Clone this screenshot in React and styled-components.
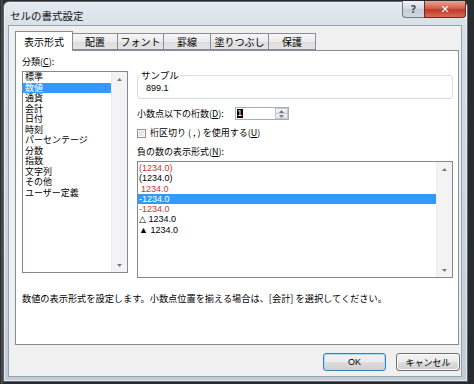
import React from "react";
import styled, { createGlobalStyle } from "styled-components";

const GlobalStyle = createGlobalStyle`
  html, body {
    margin: 0;
    padding: 0;
  }
  body {
    background: #303133;
    font-family: "Noto Sans CJK JP", "Noto Sans", sans-serif;
    color: #000;
  }
`;

const Page = styled.div`
  width: 474px;
  height: 384px;
  box-sizing: border-box;
  padding: 1px 6px 2px 3px;
  background: linear-gradient(90deg, #1e1f20 0px, #5a5c5e 2px, #2a2b2c 3px);
`;

const Window = styled.div`
  height: 100%;
  box-sizing: border-box;
  display: flex;
  flex-direction: column;
  padding: 0 5px 4px 4px;
  border: 1px solid #5b646e;
  border-radius: 6px 6px 0 0;
  background: linear-gradient(180deg, #e4eaf0 0%, #d5dde6 8%, #ccd5df 60%, #c2ccd7 100%);
  box-shadow: inset 0 0 0 1px rgba(255, 255, 255, 0.55);
`;

const TitleBar = styled.div`
  height: 23px;
  display: flex;
  align-items: flex-start;
  justify-content: space-between;
`;

const Title = styled.div`
  padding: 7px 0 0 2px;
  font-size: 10.5px;
  line-height: 13px;
  color: #111;
`;

const Captions = styled.div`
  display: flex;
  margin: -1px -4px 0 0;
`;

const CaptionButton = styled.div`
  width: ${({ $w }) => $w}px;
  height: 17px;
  box-sizing: border-box;
  display: flex;
  align-items: center;
  justify-content: center;
  border: 1px solid ${({ $close }) => ($close ? "#6b2a22" : "#6d7783")};
  border-top: none;
  border-radius: ${({ $close }) => ($close ? "0 0 4px 0" : "0 0 0 4px")};
  margin-left: ${({ $close }) => ($close ? "-1px" : "0")};
  background: ${({ $close }) =>
    $close
      ? "linear-gradient(180deg, #e8a593 0%, #d0624e 45%, #c0392b 55%, #d86c54 100%)"
      : "linear-gradient(180deg, #eef1f5 0%, #d5dbe2 45%, #c3cbd4 55%, #d3d9e0 100%)"};
  color: ${({ $close }) => ($close ? "#fff" : "#4a5560")};
  font-family: "DejaVu Sans", sans-serif;
  font-weight: bold;
  font-size: ${({ $close }) => ($close ? "11px" : "10px")};
`;

const Client = styled.div`
  flex: 1;
  display: flex;
  flex-direction: column;
  padding: 5px 1px 0 6px;
  background: #f0f0f0;
  border: 1px solid #97a3af;
`;

const Tabs = styled.div`
  height: 19px;
  display: flex;
  align-items: flex-end;
  position: relative;
  z-index: 1;
`;

const Tab = styled.div`
  width: ${({ $w }) => $w}px;
  height: ${({ $active }) => ($active ? 20 : 17)}px;
  box-sizing: border-box;
  margin-left: -1px;
  margin-bottom: ${({ $active }) => ($active ? "-1px" : "0")};
  display: flex;
  align-items: center;
  justify-content: center;
  padding-top: ${({ $active }) => ($active ? "0" : "1px")};
  border: 1px solid #898c95;
  border-bottom: ${({ $active }) => ($active ? "none" : "1px solid #898c95")};
  background: ${({ $active }) =>
    $active ? "#fff" : "linear-gradient(180deg, #f6f6f6 0%, #ebebeb 50%, #dddddd 51%, #e4e4e4 100%)"};
  font-size: 10px;
  line-height: 12px;
  &:first-child {
    margin-left: 0;
  }
`;

const Panel = styled.div`
  height: 295px;
  box-sizing: border-box;
  border: 1px solid #898c95;
  background: #fff;
  padding: 5px 5px 0 6px;
  margin-right: 1px;
`;

const Columns = styled.div`
  display: flex;
  gap: 9px;
`;

const LeftCol = styled.div`
  width: 106px;
  display: flex;
  flex-direction: column;
`;

const RightCol = styled.div`
  width: 316px;
  display: flex;
  flex-direction: column;
  padding-top: 13px;
`;

const Label = styled.div`
  font-size: 9px;
  line-height: 12px;
  height: 12px;
  white-space: nowrap;
  u {
    text-decoration: underline;
  }
`;

const ListBox = styled.div`
  height: ${({ $h }) => $h}px;
  box-sizing: border-box;
  margin-top: ${({ $mt }) => $mt}px;
  border: 1px solid #828790;
  background: #fff;
  display: flex;
`;

const Items = styled.div`
  flex: 1;
  padding-top: ${({ $pt }) => $pt}px;
`;

const Item = styled.div`
  height: ${({ $lh }) => $lh}px;
  line-height: ${({ $lh }) => $lh}px;
  padding-left: ${({ $pl }) => $pl}px;
  font-size: 9px;
  white-space: nowrap;
  background: ${({ $selected }) => ($selected ? "#3399ff" : "transparent")};
  color: ${({ $selected, $red }) => ($selected ? "#fff" : $red ? "#c23a33" : "#000")};
  font-family: ${({ $num }) => ($num ? '"Liberation Sans", sans-serif' : "inherit")};
`;

const Scrollbar = styled.div`
  width: 15px;
  display: flex;
  flex-direction: column;
  justify-content: space-between;
  background: #f3f3f3;
  border-left: 1px solid #ececec;
`;

const ScrollArrow = styled.div`
  height: 14px;
  display: flex;
  align-items: center;
  justify-content: center;
`;

const Arrow = ({ down }) => (
  <svg width="5" height="3" viewBox="0 0 5 3">
    <path d={down ? "M0 0 L5 0 L2.5 3 Z" : "M0 3 L5 3 L2.5 0 Z"} fill="#7a7a7a" />
  </svg>
);

const Sample = styled.fieldset`
  margin: 0;
  min-width: 0;
  padding: 0 2px 4px;
  border: 1px solid #d8dee4;
  border-radius: 3px;
`;

const Legend = styled.legend`
  padding: 0 1px;
  font-size: 9.5px;
  line-height: 12px;
`;

const SampleValue = styled.div`
  margin: 1px 0 0 6px;
  font-size: 9px;
  line-height: 12px;
  font-family: "Liberation Sans", sans-serif;
`;

const Row = styled.div`
  display: flex;
  align-items: center;
  margin-top: ${({ $mt }) => $mt}px;
  gap: ${({ $gap }) => $gap || 0}px;
`;

const SpinBox = styled.div`
  width: 54px;
  height: 13px;
  box-sizing: border-box;
  border: 1px solid #abadb3;
  background: #fff;
  display: flex;
  justify-content: space-between;
  align-items: stretch;
`;

const Caret = styled.span`
  margin: 1px 0 1px 1px;
  width: 6px;
  background: #000;
  color: #fff;
  font-size: 9px;
  line-height: 9px;
  text-align: center;
  font-family: "Liberation Sans", sans-serif;
`;

const SpinButtons = styled.div`
  width: 13px;
  display: flex;
  flex-direction: column;
`;

const SpinHalf = styled.div`
  flex: 1;
  display: flex;
  align-items: center;
  justify-content: center;
  border: 1px solid #c3c8ce;
  margin-top: ${({ $down }) => ($down ? "-1px" : "0")};
  background: linear-gradient(180deg, #f5f6f7, #e1e4e8);
`;

const CheckBox = styled.div`
  width: 9px;
  height: 9px;
  box-sizing: border-box;
  border: 1px solid #8f8f8f;
  background: linear-gradient(135deg, #d6d6d6, #f4f4f4);
  box-shadow: inset 0 0 0 1px #fafafa;
`;

const Description = styled.div`
  margin-top: 14px;
  font-size: 9.2px;
  line-height: 12px;
  white-space: nowrap;
`;

const ButtonRow = styled.div`
  flex: 1;
  display: flex;
  justify-content: flex-end;
  align-items: flex-start;
  gap: 10px;
  padding-top: 8px;
`;

const Button = styled.div`
  width: ${({ $w }) => $w}px;
  height: 18px;
  box-sizing: border-box;
  display: flex;
  align-items: center;
  justify-content: center;
  border: 1px solid ${({ $default }) => ($default ? "#3c7fb1" : "#707070")};
  border-radius: 3px;
  background: linear-gradient(180deg, #f2f2f2 0%, #ebebeb 50%, #dddddd 51%, #cfcfcf 100%);
  box-shadow: ${({ $default }) => ($default ? "inset 0 0 0 1px #a6e0f8" : "inset 0 0 0 1px #fbfbfb")};
  font-size: 9px;
  font-family: ${({ $latin }) => ($latin ? '"Liberation Sans", sans-serif' : "inherit")};
`;

const categories = [
  "標準",
  "数値",
  "通貨",
  "会計",
  "日付",
  "時刻",
  "パーセンテージ",
  "分数",
  "指数",
  "文字列",
  "その他",
  "ユーザー定義",
];

const negatives = [
  { text: "(1234.0)", red: true },
  { text: "(1234.0)" },
  { text: "1234.0", red: true, pad: 2 },
  { text: "-1234.0", selected: true },
  { text: "-1234.0", red: true },
  { text: "△ 1234.0" },
  { text: "▲ 1234.0" },
];

const tabs = [
  { label: "表示形式", w: 58, active: true },
  { label: "配置", w: 46 },
  { label: "フォント", w: 47 },
  { label: "罫線", w: 48 },
  { label: "塗りつぶし", w: 59 },
  { label: "保護", w: 48 },
];

export default function App() {
  return (
    <>
      <GlobalStyle />
      <Page>
        <Window>
          <TitleBar>
            <Title>セルの書式設定</Title>
            <Captions>
              <CaptionButton $w={23}>?</CaptionButton>
              <CaptionButton $w={42} $close>
                ✕
              </CaptionButton>
            </Captions>
          </TitleBar>
          <Client>
            <Tabs>
              {tabs.map((t) => (
                <Tab key={t.label} $w={t.w} $active={t.active}>
                  {t.label}
                </Tab>
              ))}
            </Tabs>
            <Panel>
              <Columns>
                <LeftCol>
                  <Label>
                    分類(<u>C</u>):
                  </Label>
                  <ListBox $h={202} $mt={3}>
                    <Items $pt={0}>
                      {categories.map((c) => (
                        <Item key={c} $lh={10.5} $pl={2} $selected={c === "数値"}>
                          {c}
                        </Item>
                      ))}
                    </Items>
                    <Scrollbar>
                      <ScrollArrow>
                        <Arrow />
                      </ScrollArrow>
                      <ScrollArrow>
                        <Arrow down />
                      </ScrollArrow>
                    </Scrollbar>
                  </ListBox>
                </LeftCol>
                <RightCol>
                  <Sample>
                    <Legend>サンプル</Legend>
                    <SampleValue>899.1</SampleValue>
                  </Sample>
                  <Row $mt={8} $gap={11}>
                    <Label>
                      小数点以下の桁数(<u>D</u>):
                    </Label>
                    <SpinBox>
                      <Caret>1</Caret>
                      <SpinButtons>
                        <SpinHalf>
                          <Arrow />
                        </SpinHalf>
                        <SpinHalf $down>
                          <Arrow down />
                        </SpinHalf>
                      </SpinButtons>
                    </SpinBox>
                  </Row>
                  <Row $mt={7} $gap={4}>
                    <CheckBox />
                    <Label>
                      桁区切り ( , ) を使用する(<u>U</u>)
                    </Label>
                  </Row>
                  <Row $mt={7}>
                    <Label>
                      負の数の表示形式(<u>N</u>):
                    </Label>
                  </Row>
                  <ListBox $h={117} $mt={3}>
                    <Items $pt={1}>
                      {negatives.map((n, i) => (
                        <Item
                          key={i}
                          $lh={10.3}
                          $pl={n.pad ? 1 + n.pad : 1}
                          $num
                          $red={n.red}
                          $selected={n.selected}
                        >
                          {n.text}
                        </Item>
                      ))}
                    </Items>
                    <Scrollbar>
                      <ScrollArrow>
                        <Arrow />
                      </ScrollArrow>
                      <ScrollArrow>
                        <Arrow down />
                      </ScrollArrow>
                    </Scrollbar>
                  </ListBox>
                </RightCol>
              </Columns>
              <Description>
                数値の表示形式を設定します。小数点位置を揃える場合は、[会計] を選択してください。
              </Description>
            </Panel>
            <ButtonRow>
              <Button $w={63} $default $latin>
                OK
              </Button>
              <Button $w={64}>キャンセル</Button>
            </ButtonRow>
          </Client>
        </Window>
      </Page>
    </>
  );
}
